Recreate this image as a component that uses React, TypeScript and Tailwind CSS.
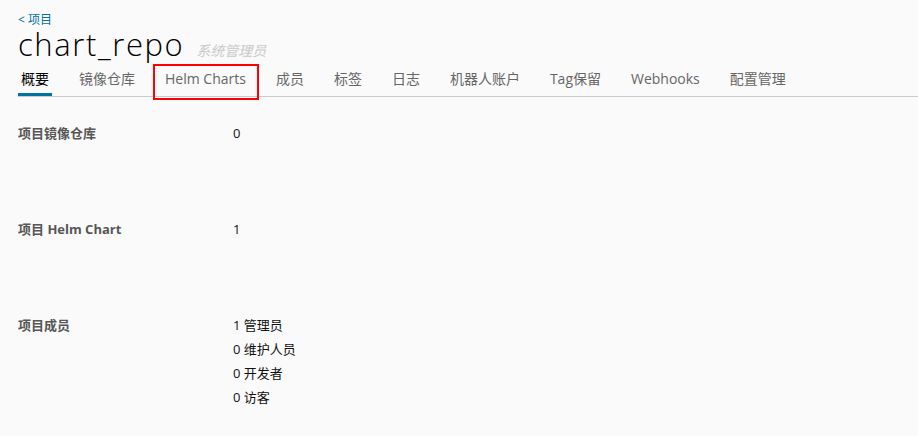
const tabs = ['概要', '镜像仓库', 'Helm Charts', '成员', '标签', '日志', '机器人账户', 'Tag保留', 'Webhooks', '配置管理']

const members = ['1 管理员', '0 维护人员', '0 开发者', '0 访客']

export default function App() {
  return (
    <div className="min-h-[436px] bg-[#fafafa] font-['Open_Sans','Noto_Sans_CJK_SC',sans-serif]">
      {/* Header */}
      <div className="pl-[18px] pt-[12px]">
        <a className="block text-[12px] leading-[16px] text-[#0072a3]">&lt; 项目</a>
        <div className="flex items-baseline h-[33px]">
          <h1 className="text-[31px] leading-[33px] font-light text-black tracking-[1.6px]">chart_repo</h1>
          <span className="ml-[12px] text-[14px] italic text-[#c9c9c9]">系统管理员</span>
        </div>
      </div>

      {/* Tabs */}
      <nav className="ml-[18px] flex gap-[24px] border-b border-[#cccccc] h-[36px]">
        {tabs.map((tab, idx) => (
          <div
            key={tab}
            className={`relative px-[3px] flex items-center text-[14px] ${
              idx === 0 ? 'text-black shadow-[inset_0_-3px_0_#0072a3]' : 'text-[#666666]'
            }`}
          >
            {tab}
            {tab === 'Helm Charts' && (
              <div className="absolute -left-[9px] -right-[10px] top-[3px] -bottom-[4px] border-2 border-[#ff0000]" />
            )}
          </div>
        ))}
      </nav>

      {/* Summary */}
      <div className="pl-[18px] pt-[24px] flex flex-col gap-[72px] text-[13px] leading-[24px]">
        <div className="flex">
          <div className="w-[215px] font-bold text-[#565656]">项目镜像仓库</div>
          <div className="text-[#111]">0</div>
        </div>
        <div className="flex">
          <div className="w-[215px] font-bold text-[#565656]">项目 Helm Chart</div>
          <div className="text-[#111]">1</div>
        </div>
        <div className="flex">
          <div className="w-[215px] font-bold text-[#565656]">项目成员</div>
          <div className="flex flex-col text-[#111]">
            {members.map(m => (
              <span key={m}>{m}</span>
            ))}
          </div>
        </div>
      </div>
    </div>
  )
}
